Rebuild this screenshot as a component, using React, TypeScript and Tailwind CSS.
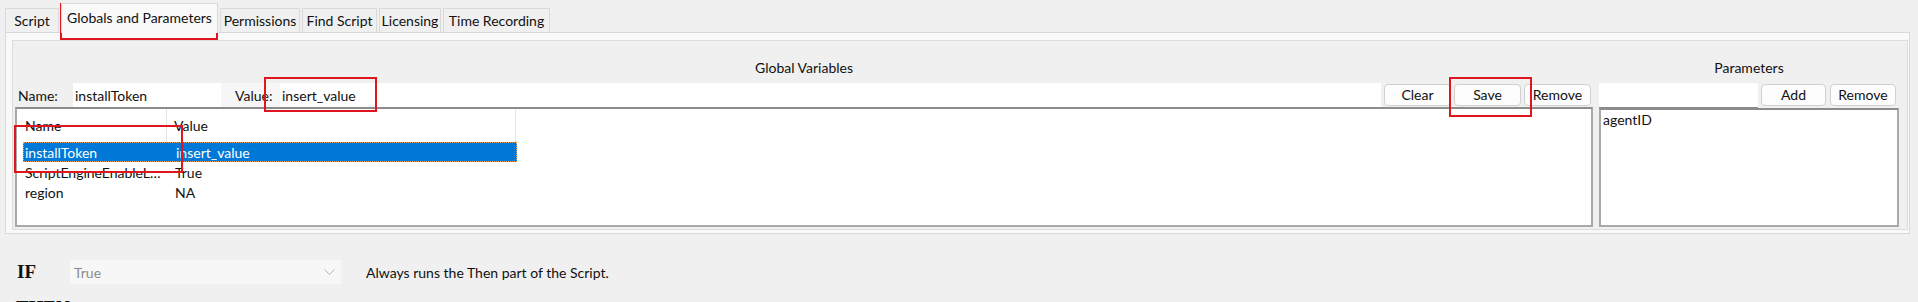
const tabs = [
  { label: 'Script', w: 'w-[54px]' },
  { label: 'Globals and Parameters', w: 'w-[157px]', active: true },
  { label: 'Permissions', w: 'w-[80px]' },
  { label: 'Find Script', w: 'w-[75px]' },
  { label: 'Licensing', w: 'w-[62px]' },
  { label: 'Time Recording', w: 'w-[107px]' },
];

const globals = [
  { name: 'installToken', value: 'insert_value', selected: true },
  { name: 'ScriptEngineEnableL…', value: 'True' },
  { name: 'region', value: 'NA' },
];

function Button({ label, w }: { label: string; w: string }) {
  return (
    <button
      className={`${w} h-[22px] self-center rounded-[4px] border border-[#d0d0d0] bg-[#fdfdfd] text-[14px] leading-none text-[#111]`}
    >
      {label}
    </button>
  );
}

export default function App() {
  return (
    <div className="relative h-[302px] w-[1918px] overflow-hidden bg-[#f0f0f0] font-['Lato',sans-serif] text-[14px] text-[#111]">
      {/* tab strip */}
      <div className="flex h-[32px] items-end whitespace-nowrap pl-[5px]">
        {tabs.map((t, i) =>
          t.active ? (
            <div
              key={t.label}
              className={`${t.w} relative z-10 -mb-px ml-[2px] flex h-[30px] items-center justify-center border border-b-0 border-[#d9d9d9] bg-[#f9f9f9] pb-[2px]`}
            >
              {t.label}
            </div>
          ) : (
            <div
              key={t.label}
              className={`${t.w} ${i === 0 ? '' : 'ml-[2px]'} flex h-[24px] items-center justify-center border border-b-0 border-[#dadada] bg-[#f0f0f0]`}
            >
              {t.label}
            </div>
          )
        )}
      </div>

      {/* tab pane */}
      <div className="ml-[5px] h-[202px] w-[1905px] border border-[#d9d9d9] bg-[#f9f9f9] pb-[3px] pl-[6px] pr-px pt-[7px]">
        <div className="flex h-full border border-[#dcdcdc] bg-[#f0f0f0] pb-[2px] pl-[2px] pr-[8px]">
          {/* global variables */}
          <div className="flex w-[1578px] flex-col">
            <div className="flex h-[42px] items-end justify-center pb-[5px] leading-[20px]">Global Variables</div>
            <div className="flex h-[24px] whitespace-nowrap">
              <div className="flex w-[58px] items-center pl-[3px]">Name:</div>
              <div className="flex w-[148px] items-center bg-white pl-[2px]">installToken</div>
              <div className="flex w-[59px] items-center bg-[#f6f6f6] pl-[14px]">Value:</div>
              <div className="flex w-[1101px] items-center bg-white pl-[2px]">insert_value</div>
              <div className="ml-[3px] flex">
                <Button label="Clear" w="w-[67px]" />
              </div>
              <div className="ml-[3px] flex">
                <Button label="Save" w="w-[67px]" />
              </div>
              <div className="ml-[3px] flex">
                <Button label="Remove" w="w-[67px]" />
              </div>
            </div>
            <div className="h-[120px] whitespace-nowrap border-2 border-[#a9a9a9] border-t-[#8c8c8c] bg-white">
              <div className="flex h-[33px]">
                <div className="flex w-[150px] items-center border-r border-[#e5e5e5] pl-[8px]">Name</div>
                <div className="flex w-[349px] items-center border-r border-[#e5e5e5] pl-[7px]">Value</div>
              </div>
              {globals.map((g) => (
                <div
                  key={g.name}
                  className={`ml-[6px] flex h-[20px] w-[494px] items-center ${
                    g.selected ? 'border border-dotted border-[#e7a15c] bg-[#0078d7] text-white' : ''
                  }`}
                >
                  <div className={`w-[152px] overflow-hidden ${g.selected ? 'pl-px' : 'pl-[2px]'}`}>{g.name}</div>
                  <div>{g.value}</div>
                </div>
              ))}
            </div>
          </div>

          {/* parameters */}
          <div className="ml-[6px] flex w-[300px] flex-col">
            <div className="flex h-[42px] items-end justify-center pb-[5px] leading-[20px]">Parameters</div>
            <div className="flex h-[25px]">
              <div className="h-[25px] w-[159px] border-b border-[#8a8a8a] bg-white" />
              <div className="ml-[3px] flex h-[24px]">
                <Button label="Add" w="w-[65px]" />
              </div>
              <div className="ml-[4px] flex h-[24px]">
                <Button label="Remove" w="w-[66px]" />
              </div>
            </div>
            <div className="h-[119px] border-2 border-[#a9a9a9] border-t-[#8c8c8c] bg-white pl-[2px] leading-[20px]">
              agentID
            </div>
          </div>
        </div>
      </div>

      {/* condition row */}
      <div className="mt-[26px] flex h-[24px] items-center">
        <div className="ml-[17px] w-[53px] font-['Liberation_Serif',serif] text-[19px] font-bold">IF</div>
        <div className="flex h-[24px] w-[271px] items-center justify-between bg-[#f7f7f7] pl-[4px] pr-[6px] text-[#8b8b8b]">
          <span>True</span>
          <svg width="11" height="7" viewBox="0 0 11 7" fill="none">
            <path d="M0.5 0.5 L5.5 5.5 L10.5 0.5" stroke="#b5b5b5" strokeWidth="1" />
          </svg>
        </div>
        <div className="ml-[25px]">Always runs the Then part of the Script.</div>
      </div>
      <div className="ml-[16px] mt-[14px] font-['Liberation_Serif',serif] text-[19px] font-bold leading-[20px]">THEN</div>

      {/* annotation boxes */}
      <div className="absolute left-[60px] top-[3px] h-[37px] w-[158px] border-2 border-[#e0161e]" />
      <div className="absolute left-[264px] top-[77px] h-[35px] w-[113px] border-2 border-[#e0161e]" />
      <div className="absolute left-[1449px] top-[77px] h-[40px] w-[83px] border-2 border-[#e0161e]" />
      <div className="absolute left-[14px] top-[125px] h-[48px] w-[169px] border-2 border-[#e0161e]" />
    </div>
  );
}
